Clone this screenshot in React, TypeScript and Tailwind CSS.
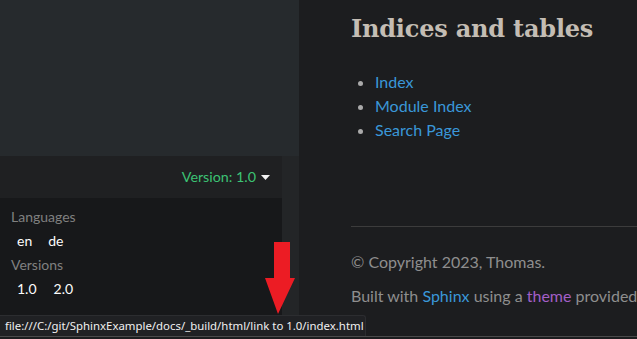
import React from "react";

export default function App() {
  return (
    <div className="relative w-[637px] h-[339px] overflow-hidden bg-[#1c1d1f] flex" style={{ fontFamily: "Lato, 'Noto Sans', sans-serif" }}>
      {/* Sidebar */}
      <div className="w-[299px] flex flex-col shrink-0">
        <div className="h-[156px] bg-[#262a2d]" />
        <div className="flex-1 flex">
          <div className="w-[282px] flex flex-col">
            <div className="h-[42px] bg-[#1f2022] flex items-center justify-end pr-[12px]">
              <span className="text-[14.3px] text-[#3cc274] leading-none">Version: 1.0</span>
              <svg width="9" height="5" viewBox="0 0 9 5" className="ml-[5px] mt-[1px]">
                <polygon points="0,0 9,0 4.5,5" fill="#f2f2f2" />
              </svg>
            </div>
            <div className="flex-1 bg-[#17181a] pl-[11px] pt-[7px] text-[14px] leading-[24px]">
              <div className="text-[#808080]">Languages</div>
              <div className="flex text-[#fcfcfc] pl-[6px] gap-[16px]">
                <span>en</span>
                <span>de</span>
              </div>
              <div className="text-[#808080]">Versions</div>
              <div className="flex text-[#fcfcfc] pl-[6px] gap-[17px]">
                <span>1.0</span>
                <span>2.0</span>
              </div>
            </div>
          </div>
          <div className="flex-1 bg-[#232527]" />
        </div>
      </div>

      {/* Main content */}
      <div className="flex-1 pl-[52px] pt-[11px]">
        <h1 className="text-[#c4bdb4] font-bold text-[24px] leading-[36px] tracking-[-0.2px]" style={{ fontFamily: "'DejaVu Serif', serif" }}>
          Indices and tables
        </h1>
        <ul className="mt-[23px] pl-[24px] list-disc text-[16px] leading-[24px] marker:text-[#aaaaaa]">
          <li className="text-[#3a97d8]">Index</li>
          <li className="text-[#3a97d8]">Module Index</li>
          <li className="text-[#3a97d8]">Search Page</li>
        </ul>
        <div className="mt-[84px] h-px bg-[#3c3c3c]" />
        <div className="mt-[23px] text-[16px] leading-[24px] text-[#8e8e8e] whitespace-nowrap">
          © Copyright 2023, Thomas.
        </div>
        <div className="mt-[10px] text-[16px] leading-[24px] text-[#8e8e8e] whitespace-nowrap">
          Built with <span className="text-[#3a97d8]">Sphinx</span> using a <span className="text-[#a35fc6]">theme</span> provided by Read the Docs.
        </div>
      </div>

      {/* Red arrow annotation */}
      <svg className="absolute left-[264px] top-[242px]" width="32" height="72" viewBox="0 0 32 72">
        <polygon points="10,0 26,0 26,36 31,36 14,72 1,36 10,36" fill="#ec1c24" />
      </svg>

      {/* Status bar */}
      <div className="absolute left-0 right-0 bottom-0 h-[3px] bg-[#1c1d1f] border-t border-[#4a4a4a]" />
      <div className="absolute left-0 top-[315px] w-[366px] h-[21px] bg-[#202124] border-t border-r border-[#2c2d30] rounded-tr-[3px] flex items-center pl-[5px]">
        <span className="text-[11.4px] text-[#f0f0f0] whitespace-nowrap leading-none" style={{ fontFamily: "'Noto Sans', sans-serif" }}>
          file:///C:/git/SphinxExample/docs/_build/html/link to 1.0/index.html
        </span>
      </div>
    </div>
  );
}
